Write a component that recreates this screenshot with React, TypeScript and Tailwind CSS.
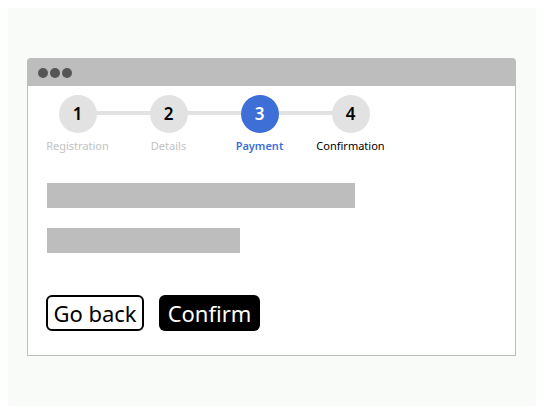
import React from "react";

const steps = [
  { n: "1", label: "Registration", state: "done" },
  { n: "2", label: "Details", state: "done" },
  { n: "3", label: "Payment", state: "active" },
  { n: "4", label: "Confirmation", state: "next" },
];

export default function App() {
  return (
    <div
      className="w-[544px] h-[414px] bg-white p-2"
      style={{ fontFamily: '"Noto Sans", "Open Sans", sans-serif' }}
    >
      <div className="w-[528px] h-[398px] bg-[#f9fbf8] pl-[19px] pt-[50px]">
        <div className="w-[489px] h-[298px] flex flex-col">
          <div className="h-[28px] bg-[#bdbdbd] rounded-t-[4px] flex items-center gap-[2px] pl-[11px] pt-[1px]">
            <div className="w-[10px] h-[10px] rounded-full bg-[#555555]" />
            <div className="w-[10px] h-[10px] rounded-full bg-[#555555]" />
            <div className="w-[10px] h-[10px] rounded-full bg-[#555555]" />
          </div>
          <div className="flex-1 bg-white border border-t-0 border-[#bdbdbd] flex flex-col">
            <div className="relative pl-[4px] pt-[9px] flex">
              <div className="absolute left-[50px] top-[25px] w-[272px] h-[4px] bg-[#e2e2e2]" />
              {steps.map((s) => (
                <div key={s.n} className="relative w-[91px] flex flex-col items-center">
                  <div
                    className={
                      s.state === "active"
                        ? "w-[38px] h-[38px] rounded-full bg-[#3d6fd6] text-white flex items-center justify-center text-[17px] font-semibold"
                        : "w-[38px] h-[38px] rounded-full bg-[#e2e2e2] text-black flex items-center justify-center text-[17px] font-semibold"
                    }
                  >
                    {s.n}
                  </div>
                  <div
                    className={
                      s.state === "active"
                        ? "mt-[5px] text-[11px] leading-[15px] font-semibold text-[#3d6fd6]"
                        : s.state === "done"
                        ? "mt-[5px] text-[11px] leading-[15px] text-[#c2c2c2]"
                        : "mt-[5px] text-[11px] leading-[15px] text-black"
                    }
                  >
                    {s.label}
                  </div>
                </div>
              ))}
            </div>
            <div className="pl-[19px] pt-[30px] flex flex-col gap-[20px]">
              <div className="w-[308px] h-[25px] bg-[#bdbdbd]" />
              <div className="w-[193px] h-[25px] bg-[#bdbdbd]" />
            </div>
            <div className="pl-[18px] pt-[42px] flex gap-[15px]">
              <button className="w-[98px] h-[36px] border-2 border-black rounded-[6px] bg-white text-black text-[22px] leading-none flex items-center justify-center">
                Go back
              </button>
              <button className="w-[101px] h-[36px] rounded-[6px] bg-black text-white text-[22px] leading-none flex items-center justify-center">
                Confirm
              </button>
            </div>
          </div>
        </div>
      </div>
    </div>
  );
}
